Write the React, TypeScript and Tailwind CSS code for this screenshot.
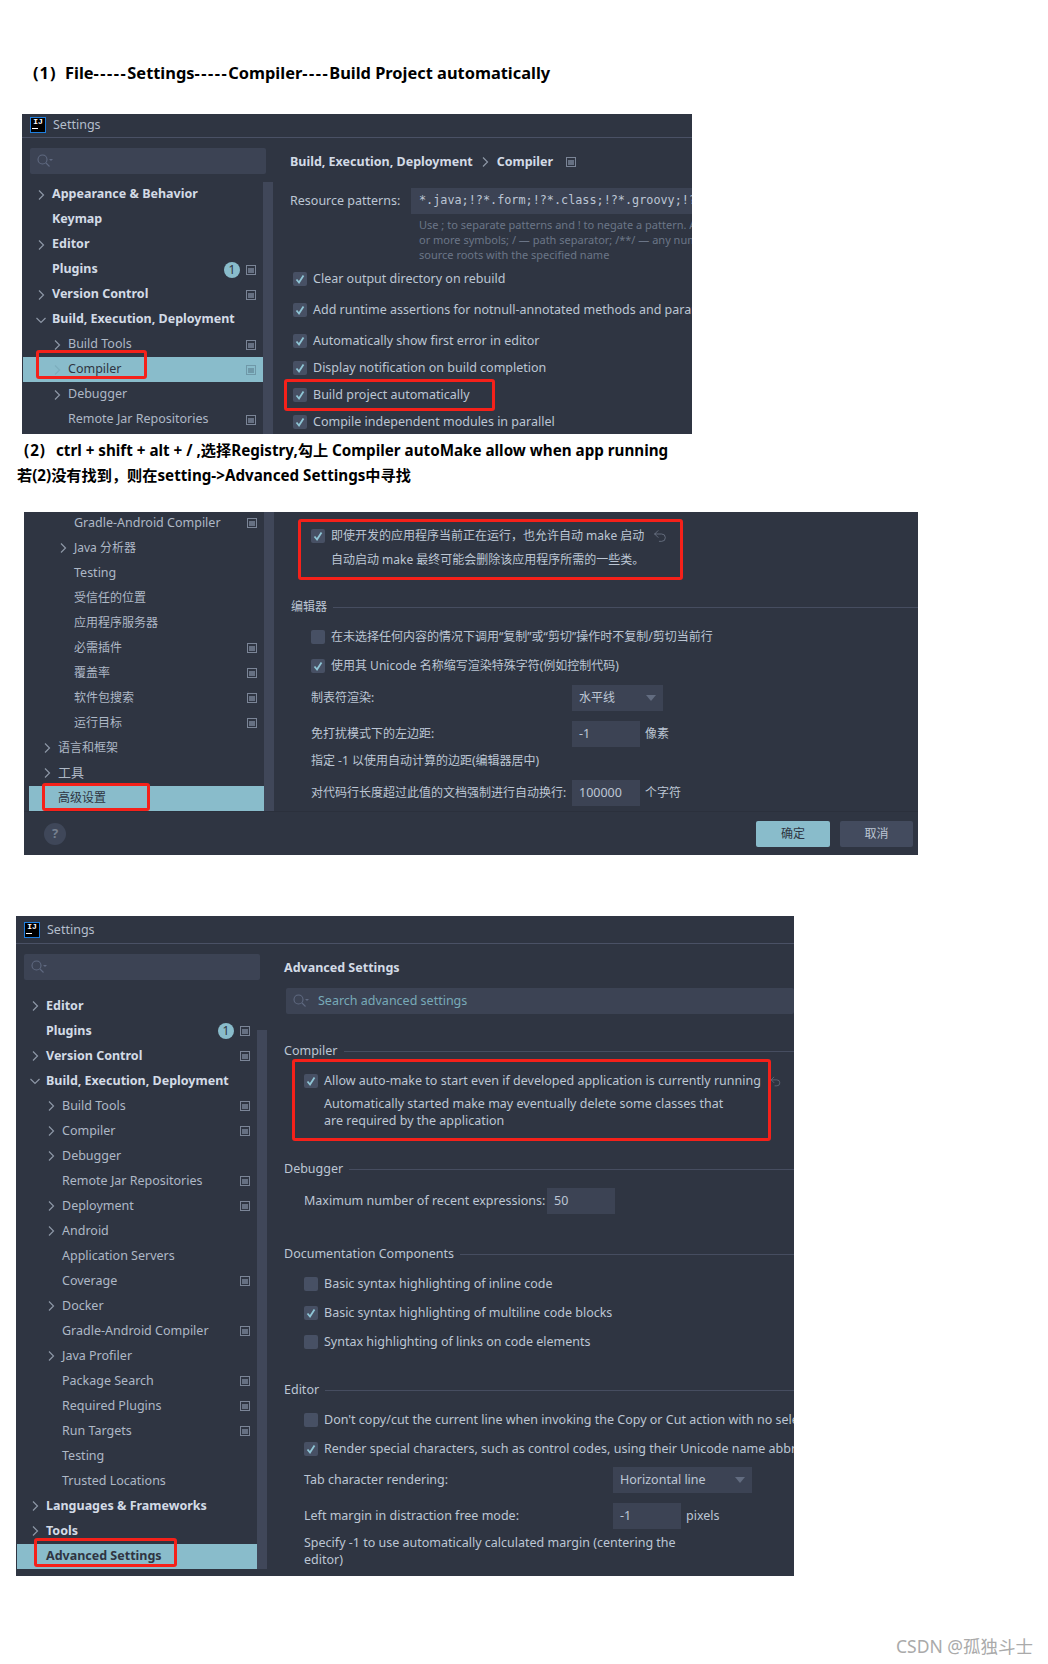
import React from 'react';
import { Undo2 } from 'lucide-react';

const Chevron = ({ open, faint }: { open?: boolean; faint?: boolean }) => (
  <svg width="12" height="12" viewBox="0 0 12 12" fill="none" stroke={faint ? '#7daebd' : '#8d97a6'} strokeWidth="1.2" className="shrink-0">
    {open ? <path d="M1.5 4l4.5 4.5L10.500 4" /> : <path d="M4 1.500l4.500 4.500L4 10.500" />}
  </svg>
);

const Pin = ({ selected }: { selected?: boolean }) => (
  <svg width="10" height="10" viewBox="0 0 10 10" className="shrink-0">
    <rect x="0.5" y="0.5" width="9" height="9" fill="none" stroke={selected ? '#6f98a8' : '#7b8597'} />
    <rect x="2" y="3" width="6" height="5" fill={selected ? '#6f98a8' : '#667082'} />
  </svg>
);

const SearchIcon = () => (
  <svg width="16" height="14" viewBox="0 0 16 14" fill="none" stroke="#5f6980" strokeWidth="1.100" className="shrink-0">
    <circle cx="5.500" cy="5.500" r="4.500" />
    <path d="M9 9l3.500 3.500" />
    <path d="M12 5h4l-2 2z" fill="#5f6980" stroke="none" />
  </svg>
);

const Logo = () => (
  <div className="w-4 h-4 bg-black border border-[#1f7fe0] flex flex-col items-center shrink-0 text-white font-bold leading-none">
    <span className="text-[8px] font-['Liberation_Mono',monospace]">IJ</span>
    <span className="w-[6px] h-px bg-white self-start ml-px mt-[2px]"></span>
  </div>
);

type RowProps = {
  label: string;
  sub?: boolean;
  chevron?: 'right' | 'down';
  pin?: boolean;
  badge?: boolean;
  bold?: boolean;
  selected?: boolean;
  size?: string;
};

const SideRow = ({ label, sub, chevron, pin, badge, bold, selected, size }: RowProps) => (
  <div
    className={`h-[25px] flex items-center pr-[7px] ${sub ? 'pl-7' : 'pl-3'} ${selected ? 'bg-[#89bccb] text-[#2f3542]' : bold ? 'text-[#d3dbe6]' : 'text-[#aeb8c6]'}`}
  >
    <div className="w-3 mr-[5px] shrink-0">{chevron && <Chevron open={chevron === 'down'} faint={selected} />}</div>
    <span className={`whitespace-nowrap ${size ?? 'text-[12.5px]'} ${bold ? 'font-bold' : ''}`}>{label}</span>
    {badge && (
      <span className="ml-auto mr-[6px] w-4 h-4 rounded-full bg-[#89bccb] text-[#2f3542] text-[12px] leading-4 text-center">1</span>
    )}
    {pin && <div className={badge ? '' : 'ml-auto'}><Pin selected={selected} /></div>}
  </div>
);

const Check = ({ on }: { on?: boolean }) => (
  <div className="w-[14px] h-[14px] rounded-[2px] bg-[#475064] flex items-center justify-center shrink-0">
    {on && (
      <svg width="10" height="10" viewBox="0 0 10 10" fill="none" stroke="#8fc5d5" strokeWidth="1.800">
        <path d="M1.500 5.500L4 8.500 8.500 1.500" />
      </svg>
    )}
  </div>
);

const CheckRow = ({ on, label, className, size, children }: { on?: boolean; label: string; className: string; size?: string; children?: React.ReactNode }) => (
  <div className={`h-6 flex items-center whitespace-nowrap ${className}`}>
    <Check on={on} />
    <span className={`ml-[6px] ${size ?? 'text-[12.5px]'}`}>{label}</span>
    {children}
  </div>
);

const Section = ({ label, className, size }: { label: string; className: string; size?: string }) => (
  <div className={`h-5 flex items-center ${className}`}>
    <span className={`${size ?? 'text-[12.5px]'} whitespace-nowrap`}>{label}</span>
    <div className="flex-1 h-px bg-[#464d60] ml-[6px]"></div>
  </div>
);

const Field = ({ value, className }: { value: string; className: string }) => (
  <div className={`h-[26px] bg-[#3c4354] text-[#bcc6d4] text-[12.5px] flex items-center pl-[7px] shrink-0 ${className}`}>{value}</div>
);

const Select = ({ value, className, size }: { value: string; className: string; size?: string }) => (
  <div className={`h-[26px] bg-[#3c4354] flex items-center justify-between pl-[7px] pr-[7px] shrink-0 ${size ?? 'text-[12.5px]'} ${className}`}>
    <span>{value}</span>
    <svg width="10" height="6" viewBox="0 0 10 6" className="shrink-0"><path d="M0 0h10L5 6z" fill="#626c80" /></svg>
  </div>
);

const RedBox = ({ className }: { className: string }) => (
  <div className={`absolute border-[3px] border-[#f5211a] rounded-[3px] ${className}`}></div>
);

const TitleBar = ({ className }: { className: string }) => (
  <div className={`flex items-center border-b border-[#4a5165] ${className}`}>
    <Logo />
    <span className="ml-[7px] text-[12.5px] text-[#b4becc]">Settings</span>
  </div>
);

const Track = ({ className }: { className: string }) => (
  <div className={`w-[10px] shrink-0 bg-[#404759] ${className}`}></div>
);

const Dashes = ({ text }: { text: string }) => <span className="tracking-[1.5px]">{text}</span>;

const App = () => {
  return (
    <div className="w-[1048px] h-[1664px] bg-white text-black overflow-hidden font-['Noto_Sans','Noto_Sans_CJK_SC',sans-serif]">
      <div className="pt-[59px] pl-[33px] h-[87px] text-[16.4px] font-bold leading-7 whitespace-nowrap">
        <span className="inline-block w-[32px] tracking-[1px]">(1)</span>File<Dashes text="-----" />Settings<Dashes text="-----" />Compiler<Dashes text="----" />Build Project automatically
      </div>

      {/* first settings shot */}
      <div className="relative mt-[27px] ml-[22px] w-[670px] h-[320px] bg-[#2f3542] text-[#bcc6d4] overflow-hidden flex flex-col">
        <TitleBar className="h-6 pl-2 pb-px shrink-0" />
        <div className="flex flex-1 min-h-0">
          <div className="w-[251px] shrink-0 flex flex-col">
            <div className="h-[26px] mt-[10px] ml-2 mr-[7px] bg-[#3c4354] rounded-[2px] flex items-center pl-[7px] shrink-0"><SearchIcon /></div>
            <div className="flex flex-1 min-h-0 mt-2">
              <div className="flex-1 pl-px min-w-0">
                <SideRow label="Appearance & Behavior" chevron="right" bold />
                <SideRow label="Keymap" bold />
                <SideRow label="Editor" chevron="right" bold />
                <SideRow label="Plugins" bold badge pin />
                <SideRow label="Version Control" chevron="right" bold pin />
                <SideRow label="Build, Execution, Deployment" chevron="down" bold />
                <SideRow label="Build Tools" sub chevron="right" pin />
                <SideRow label="Compiler" sub chevron="right" pin selected />
                <SideRow label="Debugger" sub chevron="right" />
                <SideRow label="Remote Jar Repositories" sub pin />
              </div>
              <Track className="" />
            </div>
          </div>
          <div className="flex-1 min-w-0 pl-[17px] overflow-hidden">
            <div className="h-6 mt-3 flex items-center text-[12.5px] font-bold text-[#d3dbe6] whitespace-nowrap">
              <span>Build, Execution, Deployment</span>
              <span className="mx-[6px]"><Chevron /></span>
              <span>Compiler</span>
              <span className="ml-[13px]"><Pin /></span>
            </div>
            <div className="flex items-center h-[26px] mt-[14px]">
              <span className="w-[121px] shrink-0 text-[12.5px]">Resource patterns:</span>
              <div className="flex-1 h-full bg-[#3c4354] pl-2 flex items-center text-[11.8px] whitespace-nowrap overflow-hidden font-['DejaVu_Sans_Mono',monospace]">*.java;!?*.form;!?*.class;!?*.groovy;!?*.scala</div>
            </div>
            <div className="mt-[3px] pl-[129px] text-[11px] leading-[15px] text-[#6b7587] whitespace-nowrap">
              <div>Use ; to separate patterns and ! to negate a pattern. Accepted wildcards</div>
              <div>or more symbols; / — path separator; /**/ — any number of directories</div>
              <div>source roots with the specified name</div>
            </div>
            <CheckRow on label="Clear output directory on rebuild" className="ml-[3px] mt-[5px]" />
            <CheckRow on label="Add runtime assertions for notnull-annotated methods and parameters" className="ml-[3px] mt-[7px]" />
            <CheckRow on label="Automatically show first error in editor" className="ml-[3px] mt-[7px]" />
            <CheckRow on label="Display notification on build completion" className="ml-[3px] mt-[3px]" />
            <CheckRow on label="Build project automatically" className="ml-[3px] mt-[3px]" />
            <CheckRow on label="Compile independent modules in parallel" className="ml-[3px] mt-[3px]" />
          </div>
        </div>
        <RedBox className="left-[14px] top-[236px] w-[111px] h-[29px]" />
        <RedBox className="left-[262px] top-[265px] w-[211px] h-[32px]" />
      </div>

      <div className="mt-1 ml-[24px] h-6 text-[15.2px] font-bold leading-6 whitespace-nowrap">
        <span className="inline-block w-[32px] tracking-[1px]">(2)</span>ctrl + shift + alt + / ,选择Registry,勾上 Compiler autoMake allow when app running
      </div>
      <div className="mt-px ml-[17px] h-6 text-[15.2px] font-bold leading-6 whitespace-nowrap">若(2)没有找到，则在setting-&gt;Advanced Settings中寻找</div>

      {/* chinese settings shot */}
      <div className="relative mt-[25px] ml-[24px] w-[894px] h-[343px] bg-[#2f3542] text-[#bcc6d4] overflow-hidden flex flex-col">
        <div className="flex h-[299px] shrink-0">
          <div className="w-[250px] shrink-0 flex">
            <div className="flex-1 min-w-0 pl-[5px] -mt-[1.5px]">
              <SideRow label="Gradle-Android Compiler" sub pin />
              <SideRow label="Java 分析器" sub chevron="right" size="text-[12px]" />
              <SideRow label="Testing" sub />
              <SideRow label="受信任的位置" sub size="text-[12px]" />
              <SideRow label="应用程序服务器" sub size="text-[12px]" />
              <SideRow label="必需插件" sub pin size="text-[12px]" />
              <SideRow label="覆盖率" sub pin size="text-[12px]" />
              <SideRow label="软件包搜索" sub pin size="text-[12px]" />
              <SideRow label="运行目标" sub pin size="text-[12px]" />
              <SideRow label="语言和框架" chevron="right" size="text-[12px]" />
              <SideRow label="工具" chevron="right" size="text-[13px]" />
              <SideRow label="高级设置" selected size="text-[12px]" />
            </div>
            <Track className="" />
          </div>
          <div className="flex-1 min-w-0 pl-[17px] overflow-hidden">
            <CheckRow on label="即使开发的应用程序当前正在运行，也允许自动 make 启动" className="ml-5 mt-3" size="text-[12px]">
              <Undo2 size={16} strokeWidth={1} className="ml-[8px] text-[#7b8597]" />
            </CheckRow>
            <div className="ml-10 h-6 flex items-center text-[12px] whitespace-nowrap">自动启动 make 最终可能会删除该应用程序所需的一些类。</div>
            <Section label="编辑器" className="mt-[25px]" size="text-[12px]" />
            <CheckRow label="在未选择任何内容的情况下调用“复制”或“剪切”操作时不复制/剪切当前行" className="ml-5 mt-2" size="text-[12px]" />
            <CheckRow on label="使用其 Unicode 名称缩写渲染特殊字符(例如控制代码)" className="ml-5 mt-[5px]" size="text-[12px]" />
            <div className="ml-5 mt-[7px] flex items-center text-[12px] whitespace-nowrap">
              <span className="w-[261px] shrink-0">制表符渲染:</span>
              <Select value="水平线" className="w-[91px]" size="text-[12px]" />
            </div>
            <div className="ml-5 mt-[10px] flex items-center text-[12px] whitespace-nowrap">
              <span className="w-[261px] shrink-0">免打扰模式下的左边距:</span>
              <Field value="-1" className="w-[68px]" />
              <span className="ml-[5px]">像素</span>
            </div>
            <div className="ml-5 mt-1 h-5 flex items-center text-[12px] whitespace-nowrap">指定 -1 以使用自动计算的边距(编辑器居中)</div>
            <div className="ml-5 mt-[9px] flex items-center text-[12px] whitespace-nowrap">
              <span className="w-[261px] shrink-0">对代码行长度超过此值的文档强制进行自动换行:</span>
              <Field value="100000" className="w-[68px]" />
              <span className="ml-[5px]">个字符</span>
            </div>
          </div>
        </div>
        <div className="flex-1 flex items-center pl-5 pr-[5px] border-t border-[#2b303c]">
          <div className="w-[22px] h-[22px] rounded-full bg-[#3f4759] text-[#76808f] text-[13px] font-bold flex items-center justify-center">?</div>
          <div className="ml-auto w-[74px] h-[26px] rounded-[2px] bg-[#89bccb] text-[#2f3542] text-[12px] flex items-center justify-center">确定</div>
          <div className="ml-[10px] w-[73px] h-[26px] rounded-[2px] bg-[#434b5e] text-[12px] flex items-center justify-center">取消</div>
        </div>
        <RedBox className="left-[274px] top-[7px] w-[385px] h-[61px]" />
        <RedBox className="left-[18px] top-[271px] w-[108px] h-[28px]" />
      </div>

      {/* advanced settings shot */}
      <div className="relative mt-[61px] ml-[16px] w-[778px] h-[660px] bg-[#2f3542] text-[#bcc6d4] overflow-hidden flex flex-col">
        <TitleBar className="h-7 pl-2 pt-px shrink-0" />
        <div className="flex h-[625px] shrink-0">
          <div className="w-[251px] shrink-0 flex flex-col">
            <div className="h-[26px] mt-[10px] ml-2 mr-[7px] bg-[#3c4354] rounded-[2px] flex items-center pl-[7px] shrink-0"><SearchIcon /></div>
            <div className="flex flex-1 min-h-0 mt-[13.500px]">
              <div className="flex-1 min-w-0 pl-px">
                <SideRow label="Editor" chevron="right" bold />
                <SideRow label="Plugins" bold badge pin />
                <SideRow label="Version Control" chevron="right" bold pin />
                <SideRow label="Build, Execution, Deployment" chevron="down" bold />
                <SideRow label="Build Tools" sub chevron="right" pin />
                <SideRow label="Compiler" sub chevron="right" pin />
                <SideRow label="Debugger" sub chevron="right" />
                <SideRow label="Remote Jar Repositories" sub pin />
                <SideRow label="Deployment" sub chevron="right" pin />
                <SideRow label="Android" sub chevron="right" />
                <SideRow label="Application Servers" sub />
                <SideRow label="Coverage" sub pin />
                <SideRow label="Docker" sub chevron="right" />
                <SideRow label="Gradle-Android Compiler" sub pin />
                <SideRow label="Java Profiler" sub chevron="right" />
                <SideRow label="Package Search" sub pin />
                <SideRow label="Required Plugins" sub pin />
                <SideRow label="Run Targets" sub pin />
                <SideRow label="Testing" sub />
                <SideRow label="Trusted Locations" sub />
                <SideRow label="Languages & Frameworks" chevron="right" bold />
                <SideRow label="Tools" chevron="right" bold />
                <SideRow label="Advanced Settings" bold selected />
              </div>
              <Track className="mt-[36px]" />
            </div>
          </div>
          <div className="flex-1 min-w-0 pl-[17px] overflow-hidden">
            <div className="h-6 mt-3 flex items-center text-[12.5px] font-bold text-[#d3dbe6]">Advanced Settings</div>
            <div className="h-[26px] mt-2 ml-[2px] bg-[#3c4354] rounded-[2px] flex items-center pl-[7px] text-[12.5px] text-[#78aab8]">
              <SearchIcon />
              <span className="ml-[9px]">Search advanced settings</span>
            </div>
            <Section label="Compiler" className="mt-[27px]" />
            <CheckRow on label="Allow auto-make to start even if developed application is currently running" className="ml-5 mt-[8px]">
              <Undo2 size={13} strokeWidth={1} className="ml-[8px] text-[#7b8597]" />
            </CheckRow>
            <div className="ml-10 mt-[1.500px] text-[12.5px] leading-[17px] whitespace-nowrap">
              <div>Automatically started make may eventually delete some classes that</div>
              <div>are required by the application</div>
            </div>
            <Section label="Debugger" className="mt-[30.500px]" />
            <div className="ml-5 mt-[9px] flex items-center text-[12.5px] whitespace-nowrap">
              <span className="w-[243px] shrink-0">Maximum number of recent expressions:</span>
              <Field value="50" className="w-[68px]" />
            </div>
            <Section label="Documentation Components" className="mt-[30px]" />
            <CheckRow label="Basic syntax highlighting of inline code" className="ml-5 mt-[8px]" />
            <CheckRow on label="Basic syntax highlighting of multiline code blocks" className="ml-5 mt-[5px]" />
            <CheckRow label="Syntax highlighting of links on code elements" className="ml-5 mt-[5px]" />
            <Section label="Editor" className="mt-[26px]" />
            <CheckRow label="Don't copy/cut the current line when invoking the Copy or Cut action with no selection" className="ml-5 mt-[8px]" />
            <CheckRow on label="Render special characters, such as control codes, using their Unicode name abbreviations" className="ml-5 mt-[5px]" />
            <div className="ml-5 mt-[6px] flex items-center text-[12.5px] whitespace-nowrap">
              <span className="w-[309px] shrink-0">Tab character rendering:</span>
              <Select value="Horizontal line" className="w-[139px]" />
            </div>
            <div className="ml-5 mt-[10px] flex items-center text-[12.5px] whitespace-nowrap">
              <span className="w-[309px] shrink-0">Left margin in distraction free mode:</span>
              <Field value="-1" className="w-[68px]" />
              <span className="ml-[5px]">pixels</span>
            </div>
            <div className="ml-5 mt-[5px] text-[12.5px] leading-[17px] whitespace-nowrap">
              <div>Specify -1 to use automatically calculated margin (centering the</div>
              <div>editor)</div>
            </div>
          </div>
        </div>
        <RedBox className="left-[276px] top-[143px] w-[479px] h-[82px]" />
        <RedBox className="left-[18px] top-[622px] w-[143px] h-[29px]" />
      </div>

      <div className="mt-[57px] mr-[15px] h-[26px] flex items-center justify-end text-[17.5px] text-[#aaaaaa]">CSDN @孤独斗士</div>
    </div>
  );
};

export default App;
